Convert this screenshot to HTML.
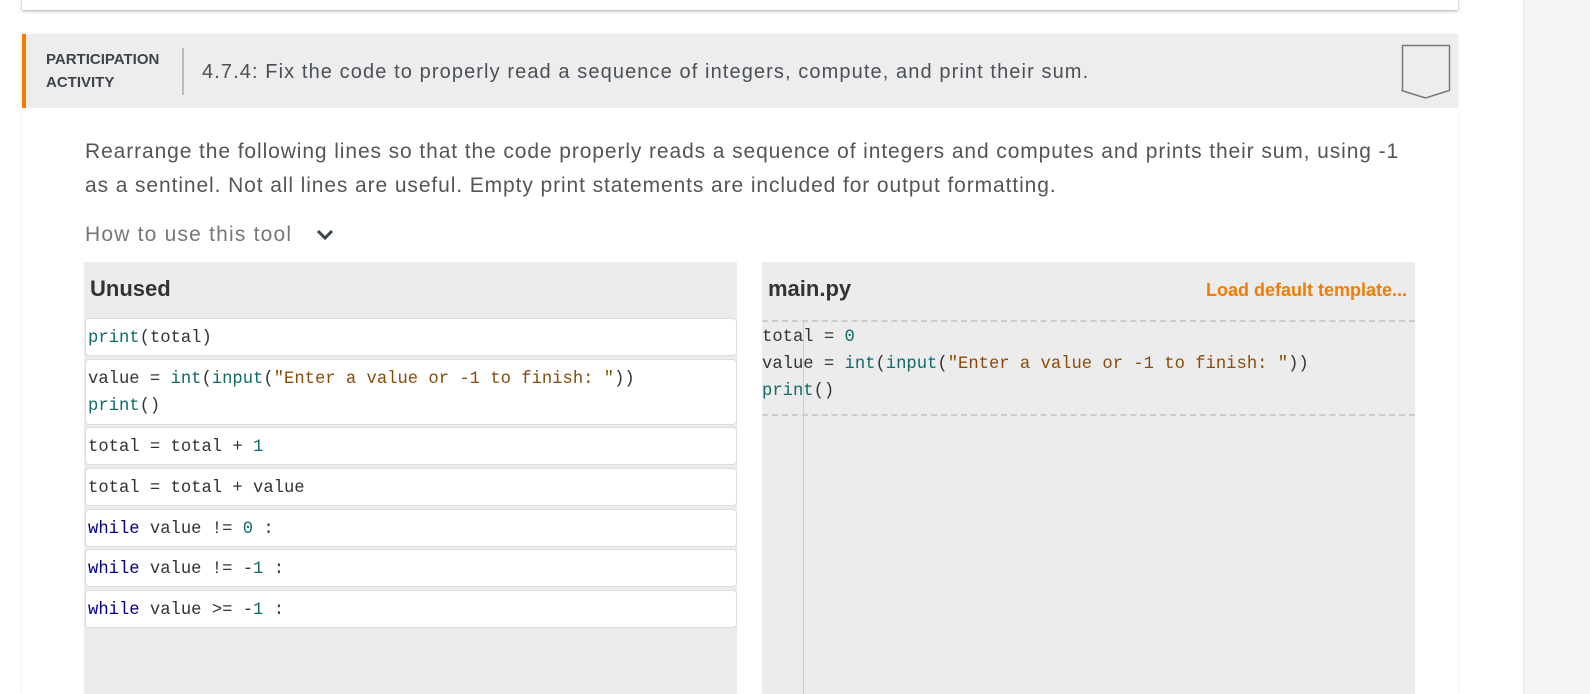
<!DOCTYPE html>
<html><head><meta charset="utf-8"><style>
*{margin:0;padding:0;box-sizing:border-box}
html{width:1590px;height:694px;overflow:hidden}
body{width:1590px;height:694px;background:#fff;position:relative;overflow:hidden;font-family:"Liberation Sans",sans-serif}
.side{position:absolute;left:1523px;top:0;width:67px;height:694px;background:#f4f4f4;border-left:1px solid #e8e8e8}
.topcard{position:absolute;left:22px;top:-10px;width:1436px;height:20px;background:#fff;box-shadow:0 1px 3px rgba(0,0,0,.35)}
.card{position:absolute;left:22px;top:34px;width:1436px;height:660px;background:#fff;box-shadow:0 0 3px rgba(0,0,0,.08);overflow:hidden}
.hdr{position:absolute;left:0;top:0;width:1436px;height:74px;background:#ededed;border-left:4px solid #f57c00}
.pa{position:absolute;left:20px;top:14px;font-weight:bold;font-size:15px;line-height:23px;color:#3d434a}
.div{position:absolute;left:156px;top:14px;width:2px;height:47px;background:#bbb}
.title{position:absolute;left:176px;top:27px;font-size:20px;letter-spacing:1.1px;color:#4a5058}
.pocket{position:absolute;left:1375px;top:10px}
.inst{position:absolute;left:63px;top:101px;width:1325px;font-size:21px;letter-spacing:0.9px;line-height:34px;color:#555}
.how{position:absolute;left:63px;top:189px;font-size:21px;letter-spacing:1.2px;color:#777}
.panel{position:absolute;top:228px;width:653px;height:432px;background:#ececec;overflow:hidden}
.ph{position:absolute;left:6px;top:14px;font-weight:bold;font-size:22px;color:#333}
.item{position:absolute;left:1px;width:652px;background:#fff;border:1px solid #ddd;border-radius:4px;font-family:"Liberation Mono",monospace;font-size:17.2px;line-height:27px;color:#333;padding:6px 0 0 2px;white-space:pre}
.k{color:#00008b}.f{color:#116b6b}.s{color:#8a4b08}.n{color:#116b6b}
.code{position:absolute;left:0;top:62px;font-family:"Liberation Mono",monospace;font-size:17.2px;line-height:27px;color:#333;white-space:pre}
</style></head><body>
<div class="side"></div>
<div class="topcard"></div>
<div class="card">
 <div class="hdr">
  <div class="pa">PARTICIPATION<br>ACTIVITY</div>
  <div class="div"></div>
  <div class="title">4.7.4: Fix the code to properly read a sequence of integers, compute, and print their sum.</div>
  <svg class="pocket" width="50" height="56" viewBox="0 0 50 56"><path d="M1.5 1.5H48.5V46.5L24.5 54L0.5 46.5H1.5Z" fill="none" stroke="#777" stroke-width="1.5"/></svg>
 </div>
 <div class="inst">Rearrange the following lines so that the code properly reads a sequence of integers and computes and prints their sum, using -1 as a sentinel. Not all lines are useful. Empty print statements are included for output formatting.</div>
 <div class="how">How to use this tool <svg width="20" height="14" viewBox="0 0 20 14" style="margin-left:16px;vertical-align:middle"><path d="M3 3L10 10L17 3" fill="none" stroke="#3d434a" stroke-width="3"/></svg></div>
 <div class="panel" style="left:62px">
  <div class="ph">Unused</div>
  <div class="item" style="top:56px;height:38px"><span class="f">print</span>(total)</div>
  <div class="item" style="top:97px;height:66px">value = <span class="f">int</span>(<span class="f">input</span>(<span class="s">"Enter a value or -1 to finish: "</span>))
<span class="f">print</span>()</div>
  <div class="item" style="top:165px;height:38px">total = total + <span class="n">1</span></div>
  <div class="item" style="top:206px;height:38px">total = total + value</div>
  <div class="item" style="top:247px;height:38px"><span class="k">while</span> value != <span class="n">0</span> :</div>
  <div class="item" style="top:287px;height:38px"><span class="k">while</span> value != -<span class="n">1</span> :</div>
  <div class="item" style="top:328px;height:38px"><span class="k">while</span> value &gt;= -<span class="n">1</span> :</div>
 </div>
 <div class="panel" style="left:740px">
  <div class="ph">main.py</div>
  <div style="position:absolute;right:8px;top:18px;font-weight:bold;font-size:18px;color:#f57c00">Load default template...</div>
  <div style="position:absolute;left:0;top:58px;width:653px;border-top:2px dashed #ccc"></div>
  <div style="position:absolute;left:0;top:152px;width:653px;border-top:2px dashed #ccc"></div>
  <div style="position:absolute;left:41px;top:58px;width:1px;height:374px;background:#ccc"></div>
  <div class="code">total = <span class="n">0</span>
value = <span class="f">int</span>(<span class="f">input</span>(<span class="s">"Enter a value or -1 to finish: "</span>))
<span class="f">print</span>()</div>
 </div>
</div>
</body></html>
